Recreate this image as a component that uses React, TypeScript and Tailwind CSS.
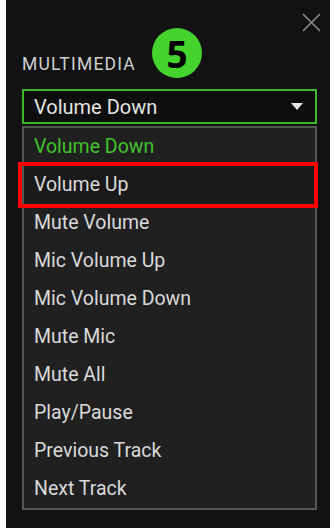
import React from 'react';

const items = [
  'Volume Down',
  'Volume Up',
  'Mute Volume',
  'Mic Volume Up',
  'Mic Volume Down',
  'Mute Mic',
  'Mute All',
  'Play/Pause',
  'Previous Track',
  'Next Track',
];

export default function App() {
  return (
    <div className="w-[334px] h-[528px] bg-white pl-[6px] pr-[4px]" style={{ fontFamily: 'Roboto, "Liberation Sans", sans-serif' }}>
      <div className="relative h-full bg-[#121212] pl-[16px] pr-[13px] pt-[28px]">
        {/* close */}
        <svg className="absolute left-[296px] top-[13px]" width="19" height="19" viewBox="0 0 19 19">
          <path d="M1 1 L18 18 M18 1 L1 18" stroke="#8c8c8c" strokeWidth="1.6" />
        </svg>

        {/* step badge */}
        <div className="absolute left-[146px] top-[28px] w-[50px] h-[50px] rounded-full bg-[#45d42e] flex items-center justify-center">
          <span className="text-[37px] font-bold text-black leading-none" style={{ fontFamily: '"Open Sans", sans-serif' }}>5</span>
        </div>

        <div className="h-[61px] pt-[25px]">
          <span className="text-[17.5px] leading-[20px] text-[#d0d0d0] tracking-[1.2px]">MULTIMEDIA</span>
        </div>

        {/* select */}
        <div className="h-[35px] border-2 border-[#3cb82a] bg-[#0e0e0e] flex items-center justify-between pl-[10px] pr-[12px]">
          <span className="text-[20px] text-[#e4e4e4]">Volume Down</span>
          <svg width="12" height="7" viewBox="0 0 12 7">
            <path d="M0 0 H12 L6 7 Z" fill="#e6e6e6" />
          </svg>
        </div>

        {/* list */}
        <div className="relative mt-[2px] border-2 border-[#565656] bg-[#202020]">
          {items.map((it, i) => (
            <div
              key={it}
              className={`h-[38px] flex items-center pl-[10px] text-[19.5px] ${i === 0 ? 'text-[#3fc42c]' : 'text-[#dadada]'} ${i === 1 ? 'bg-[#1a1a1a]' : ''}`}
            >
              {it}
            </div>
          ))}
          {/* highlight annotation */}
          <div className="absolute left-[-6px] right-[-3px] top-[34px] h-[46px] border-[4px] border-[#ff0000] pointer-events-none" />
        </div>
      </div>
    </div>
  );
}
